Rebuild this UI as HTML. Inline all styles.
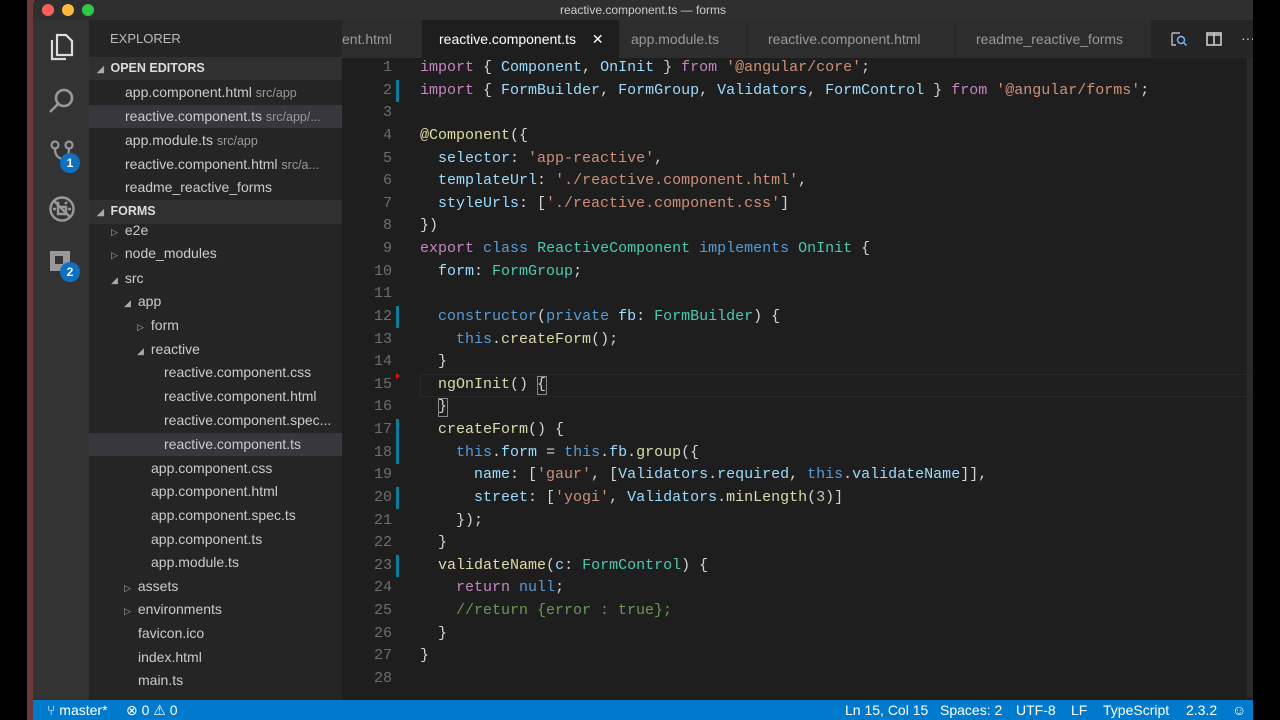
<!DOCTYPE html>
<html><head><meta charset="utf-8"><style>
*{margin:0;padding:0;box-sizing:border-box}
body{width:1280px;height:720px;background:#000;position:relative;overflow:hidden;font-family:"Liberation Sans",sans-serif}
.abs{position:absolute}
#win{left:33px;top:0;width:1220px;height:720px;background:#1e1e1e;border-radius:5px 0 0 0;overflow:hidden}
#title{left:0;top:0;width:1220px;height:20px;background:#2f2f2f;color:#ccc;font-size:12px;text-align:center;line-height:20px}
.dot{top:4px;width:12px;height:12px;border-radius:50%}
#act{left:0;top:20px;width:56px;height:680px;background:#333}
#side{left:56px;top:20px;width:253px;height:680px;background:#252526;color:#ccc;font-size:14px}
.row{position:absolute;left:0;width:253px;height:23px;line-height:23px;white-space:nowrap;overflow:hidden}
.row .d{color:#999;font-size:12.5px}
.hd{font-weight:bold;font-size:12.5px;color:#ddd}
.tw{display:inline-block;width:10px;color:#aaa;font-size:9px}
#tabs{left:309px;top:20px;width:911px;height:38px;background:#252526;font-size:14px;color:#9a9a9a}
.tab{position:absolute;top:0;height:38px;line-height:38px;padding-left:0;white-space:nowrap;background:#2d2d2d}
#code{left:309px;top:57px;font-family:"Liberation Mono",monospace;font-size:15px;color:#d4d4d4}
.ln{position:absolute;left:0;width:50px;text-align:right;color:#6e6e6e;height:22.63px;line-height:22.63px}
.cl{position:absolute;left:78px;white-space:pre;height:22.63px;line-height:22.63px}
.k{color:#c586c0}.b{color:#569cd6}.t{color:#4ec9b0}.s{color:#ce9178}.f{color:#dcdcaa}.v{color:#9cdcfe}.c{color:#6a9955}.n{color:#b5cea8}
.gm{position:absolute;left:54px;width:3px;background:#0c7d9d}
#status{left:0;top:700px;width:1220px;height:20px;background:#007acc;color:#fff;font-size:14px;line-height:20px}
</style></head><body>
<div class="abs" style="left:27px;top:0;width:8px;height:720px;background:#6b3a3a"></div>
<div id="win" class="abs">
<div id="title" class="abs">reactive.component.ts — forms</div>
<div class="abs dot" style="left:9px;background:#fc605b"></div>
<div class="abs dot" style="left:29px;background:#fdbc40"></div>
<div class="abs dot" style="left:49px;background:#34c84a"></div>
<div id="act" class="abs">
<svg class="abs" style="left:16px;top:13px" width="26" height="28" viewBox="0 0 26 28" fill="none" stroke="#ddd" stroke-width="2.2"><path d="M8 2h9l6 6v14h-15z"/><path d="M3 7v19h14"/></svg>
<svg class="abs" style="left:15px;top:67px" width="28" height="28" viewBox="0 0 28 28" fill="none" stroke="#999" stroke-width="2.6"><circle cx="16" cy="11" r="8"/><path d="M10 17l-8 8"/></svg>
<svg class="abs" style="left:17px;top:120px" width="26" height="30" viewBox="0 0 26 30" fill="none" stroke="#999" stroke-width="2.2"><circle cx="5" cy="5" r="3.5"/><circle cx="19" cy="5" r="3.5"/><path d="M5 9q0 8 7 10M19 9q0 8-7 10v6"/></svg>
<div class="abs" style="left:27px;top:133px;width:20px;height:20px;border-radius:50%;background:#0e70c0;color:#fff;font-size:12px;font-weight:bold;text-align:center;line-height:20px">1</div>
<svg class="abs" style="left:15px;top:175px" width="28" height="28" viewBox="0 0 28 28" fill="none" stroke="#999" stroke-width="2.4"><circle cx="14" cy="14" r="11.5"/><path d="M6 6l16 16M10 12h8v7h-8zM8 14h-3M23 14h-3M11 9l-2-2M17 9l2-2"/></svg>
<svg class="abs" style="left:16px;top:230px" width="26" height="26" viewBox="0 0 26 26"><rect x="1" y="1" width="20" height="20" fill="#999"/><rect x="6" y="6" width="8" height="8" fill="#333"/></svg>
<div class="abs" style="left:27px;top:242px;width:20px;height:20px;border-radius:50%;background:#0e70c0;color:#fff;font-size:12px;font-weight:bold;text-align:center;line-height:20px">2</div>
</div>
<div id="side" class="abs">
<div class="row" style="top:7px;left:21px;font-size:13px;color:#bbb">EXPLORER</div>
<div class="row hd" style="top:37px;background:#303031;padding-left:8px"><span class="tw">◢</span> OPEN EDITORS</div>
<div class="row" style="top:61px;padding-left:36px">app.component.html <span class="d">src/app</span></div>
<div class="row" style="top:85px;padding-left:36px;background:#37373d">reactive.component.ts <span class="d">src/app/...</span></div>
<div class="row" style="top:109px;padding-left:36px">app.module.ts <span class="d">src/app</span></div>
<div class="row" style="top:133px;padding-left:36px">reactive.component.html <span class="d">src/a...</span></div>
<div class="row" style="top:156px;padding-left:36px">readme_reactive_forms</div>
<div class="row hd" style="top:180px;background:#303031;padding-left:8px;height:24px"><span class="tw">◢</span> FORMS</div>
<div class="row" style="top:199px;padding-left:22px"><span class="tw">▷</span> e2e</div>
<div class="row" style="top:222px;padding-left:22px"><span class="tw">▷</span> node_modules</div>
<div class="row" style="top:247px;padding-left:22px"><span class="tw">◢</span> src</div>
<div class="row" style="top:270px;padding-left:35px"><span class="tw">◢</span> app</div>
<div class="row" style="top:294px;padding-left:48px"><span class="tw">▷</span> form</div>
<div class="row" style="top:318px;padding-left:48px"><span class="tw">◢</span> reactive</div>
<div class="row" style="top:341px;padding-left:75px">reactive.component.css</div>
<div class="row" style="top:365px;padding-left:75px">reactive.component.html</div>
<div class="row" style="top:389px;padding-left:75px">reactive.component.spec...</div>
<div class="row" style="top:413px;padding-left:75px;background:#37373d">reactive.component.ts</div>
<div class="row" style="top:437px;padding-left:62px">app.component.css</div>
<div class="row" style="top:460px;padding-left:62px">app.component.html</div>
<div class="row" style="top:484px;padding-left:62px">app.component.spec.ts</div>
<div class="row" style="top:508px;padding-left:62px">app.component.ts</div>
<div class="row" style="top:531px;padding-left:62px">app.module.ts</div>
<div class="row" style="top:555px;padding-left:35px"><span class="tw">▷</span> assets</div>
<div class="row" style="top:578px;padding-left:35px"><span class="tw">▷</span> environments</div>
<div class="row" style="top:602px;padding-left:49px">favicon.ico</div>
<div class="row" style="top:626px;padding-left:49px">index.html</div>
<div class="row" style="top:649px;padding-left:49px">main.ts</div>
</div>
<div id="tabs" class="abs">
<div class="tab" style="left:0;width:80px">ent.html</div>
<div class="tab" style="left:80px;width:197px;background:#1e1e1e;color:#fff;padding-left:17px">reactive.component.ts <span style="margin-left:12px">✕</span></div>
<div class="tab" style="left:277px;width:127px;padding-left:12px">app.module.ts</div>
<div class="tab" style="left:405px;width:207px;padding-left:21px">reactive.component.html</div>
<div class="tab" style="left:613px;width:196px;padding-left:21px">readme_reactive_forms</div>
<svg class="abs" style="left:829px;top:11px" width="16" height="16" viewBox="0 0 16 16" fill="none" stroke="#bbb" stroke-width="1.4"><path d="M1 2h8M1 2v12h4"/><circle cx="10" cy="9" r="3.5" stroke="#75beff"/><path d="M12.5 11.5l3 3" stroke="#75beff"/></svg>
<svg class="abs" style="left:864px;top:12px" width="16" height="14" viewBox="0 0 16 14" fill="none" stroke="#ccc" stroke-width="1.6"><rect x="1" y="1" width="14" height="12"/><path d="M8 1v12M1 3h14" /></svg>
<div class="abs" style="left:899px;top:10px;color:#ccc;font-size:14px">···</div>
</div>
<div class="abs" style="left:1214px;top:58px;width:6px;height:640px;background:#2a2a2a"></div>
<div id="code" class="abs">
<div class="abs" style="left:78px;top:317px;width:834px;height:23px;border:1px solid #282828"></div>
<div class="abs" style="left:195px;top:319px;width:10px;height:19px;border:1px solid #888"></div>
<div class="abs" style="left:96px;top:341px;width:10px;height:19px;border:1px solid #888"></div>
<div class="gm" style="top:23px;height:22px"></div>
<div class="gm" style="top:249px;height:22px"></div>
<div class="gm" style="top:362px;height:45px"></div>
<div class="gm" style="top:430px;height:22px"></div>
<div class="gm" style="top:498px;height:22px"></div>
<div class="abs" style="left:54px;top:316px;width:0;height:0;border-top:3px solid transparent;border-bottom:3px solid transparent;border-left:4px solid #e51400"></div>
<div class="ln" style="top:0">1</div><div class="cl" style="top:0"><span class="k">import</span> { <span class="v">Component</span>, <span class="v">OnInit</span> } <span class="k">from</span> <span class="s">'@angular/core'</span>;</div>
<div class="ln" style="top:22.63px">2</div><div class="cl" style="top:22.63px"><span class="k">import</span> { <span class="v">FormBuilder</span>, <span class="v">FormGroup</span>, <span class="v">Validators</span>, <span class="v">FormControl</span> } <span class="k">from</span> <span class="s">'@angular/forms'</span>;</div>
<div class="ln" style="top:45.26px">3</div>
<div class="ln" style="top:67.89px">4</div><div class="cl" style="top:67.89px"><span class="f">@Component</span>({</div>
<div class="ln" style="top:90.52px">5</div><div class="cl" style="top:90.52px">  <span class="v">selector</span>: <span class="s">'app-reactive'</span>,</div>
<div class="ln" style="top:113.15px">6</div><div class="cl" style="top:113.15px">  <span class="v">templateUrl</span>: <span class="s">'./reactive.component.html'</span>,</div>
<div class="ln" style="top:135.78px">7</div><div class="cl" style="top:135.78px">  <span class="v">styleUrls</span>: [<span class="s">'./reactive.component.css'</span>]</div>
<div class="ln" style="top:158.41px">8</div><div class="cl" style="top:158.41px">})</div>
<div class="ln" style="top:181.04px">9</div><div class="cl" style="top:181.04px"><span class="k">export</span> <span class="b">class</span> <span class="t">ReactiveComponent</span> <span class="b">implements</span> <span class="t">OnInit</span> {</div>
<div class="ln" style="top:203.67px">10</div><div class="cl" style="top:203.67px">  <span class="v">form</span>: <span class="t">FormGroup</span>;</div>
<div class="ln" style="top:226.3px">11</div>
<div class="ln" style="top:248.93px">12</div><div class="cl" style="top:248.93px">  <span class="b">constructor</span>(<span class="b">private</span> <span class="v">fb</span>: <span class="t">FormBuilder</span>) {</div>
<div class="ln" style="top:271.56px">13</div><div class="cl" style="top:271.56px">    <span class="b">this</span>.<span class="f">createForm</span>();</div>
<div class="ln" style="top:294.19px">14</div><div class="cl" style="top:294.19px">  }</div>
<div class="ln" style="top:316.82px">15</div><div class="cl" style="top:316.82px">  <span class="f">ngOnInit</span>() {</div>
<div class="ln" style="top:339.45px">16</div><div class="cl" style="top:339.45px">  }</div>
<div class="ln" style="top:362.08px">17</div><div class="cl" style="top:362.08px">  <span class="f">createForm</span>() {</div>
<div class="ln" style="top:384.71px">18</div><div class="cl" style="top:384.71px">    <span class="b">this</span>.<span class="v">form</span> = <span class="b">this</span>.<span class="v">fb</span>.<span class="f">group</span>({</div>
<div class="ln" style="top:407.34px">19</div><div class="cl" style="top:407.34px">      <span class="v">name</span>: [<span class="s">'gaur'</span>, [<span class="v">Validators</span>.<span class="v">required</span>, <span class="b">this</span>.<span class="v">validateName</span>]],</div>
<div class="ln" style="top:429.97px">20</div><div class="cl" style="top:429.97px">      <span class="v">street</span>: [<span class="s">'yogi'</span>, <span class="v">Validators</span>.<span class="f">minLength</span>(<span class="n">3</span>)]</div>
<div class="ln" style="top:452.6px">21</div><div class="cl" style="top:452.6px">    });</div>
<div class="ln" style="top:475.23px">22</div><div class="cl" style="top:475.23px">  }</div>
<div class="ln" style="top:497.86px">23</div><div class="cl" style="top:497.86px">  <span class="f">validateName</span>(<span class="v">c</span>: <span class="t">FormControl</span>) {</div>
<div class="ln" style="top:520.49px">24</div><div class="cl" style="top:520.49px">    <span class="k">return</span> <span class="b">null</span>;</div>
<div class="ln" style="top:543.12px">25</div><div class="cl" style="top:543.12px">    <span class="c">//return {error : true};</span></div>
<div class="ln" style="top:565.75px">26</div><div class="cl" style="top:565.75px">  }</div>
<div class="ln" style="top:588.38px">27</div><div class="cl" style="top:588.38px">}</div>
<div class="ln" style="top:611.01px">28</div>
</div>
<div id="status" class="abs">
<span class="abs" style="left:14px">⑂ master*</span>
<span class="abs" style="left:93px">⊗ 0 ⚠ 0</span>
<span class="abs" style="left:812px">Ln 15, Col 15</span>
<span class="abs" style="left:907px">Spaces: 2</span>
<span class="abs" style="left:983px">UTF-8</span>
<span class="abs" style="left:1038px">LF</span>
<span class="abs" style="left:1070px">TypeScript</span>
<span class="abs" style="left:1153px">2.3.2</span>
<span class="abs" style="left:1199px">☺</span>
</div>
</div>
</body></html>
